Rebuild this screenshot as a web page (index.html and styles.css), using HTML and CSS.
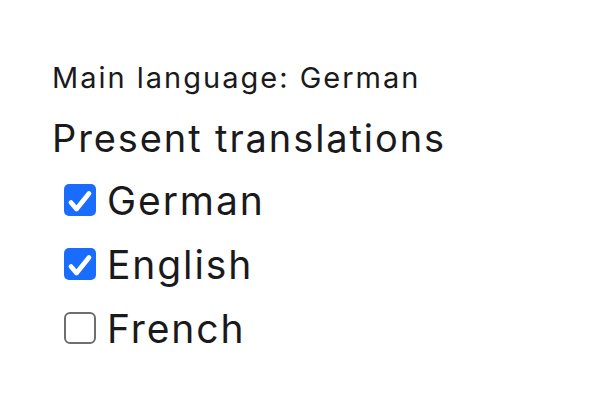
FILE: index.html
```html
<!DOCTYPE html>
<html lang="en">
<head>
    <meta charset="UTF-8">
    <meta name="viewport" content="width=device-width, initial-scale=1.0">
    <title>Translations</title>
    <link rel="stylesheet" href="styles.css">
</head>
<body>
    <div class="panel">
        <p class="main-lang">Main language: German</p>
        <h2 class="title">Present translations</h2>
        <ul class="lang-list">
            <li>
                <label class="lang">
                    <input type="checkbox" checked>
                    <span class="box">
                        <svg viewBox="0 0 32 32" width="32" height="32"><path d="M7 18.5 L12.5 25 L25 9.5" fill="none" stroke="#fff" stroke-width="4.8" stroke-linecap="round" stroke-linejoin="round"/></svg>
                    </span>
                    <span class="name">German</span>
                </label>
            </li>
            <li>
                <label class="lang">
                    <input type="checkbox" checked>
                    <span class="box">
                        <svg viewBox="0 0 32 32" width="32" height="32"><path d="M7 18.5 L12.5 25 L25 9.5" fill="none" stroke="#fff" stroke-width="4.8" stroke-linecap="round" stroke-linejoin="round"/></svg>
                    </span>
                    <span class="name">English</span>
                </label>
            </li>
            <li>
                <label class="lang">
                    <input type="checkbox">
                    <span class="box"></span>
                    <span class="name">French</span>
                </label>
            </li>
        </ul>
    </div>
</body>
</html>
```

FILE: styles.css
```css
body {
    margin: 0;
    background: #fff;
    color: #1a1a1c;
    font-family: Inter, "Noto Sans", sans-serif;
}

.panel {
    padding: 58px 52px;
}

.main-lang {
    margin: 0;
    font-size: 29px;
    line-height: 40px;
    letter-spacing: 2px;
}

.title {
    margin: 16px 0 0;
    font-size: 38px;
    font-weight: 400;
    line-height: 48px;
    letter-spacing: 1.9px;
}

.lang-list {
    list-style: none;
    margin: 6px 0 0 12px;
    padding: 0;
}

.lang {
    display: flex;
    align-items: center;
    gap: 11px;
    height: 64px;
    font-size: 39px;
    letter-spacing: 1.9px;
}

.lang input {
    display: none;
}

.box {
    width: 32px;
    height: 32px;
    box-sizing: border-box;
    border-radius: 6px;
    border: 2.5px solid #6e6e6e;
    display: flex;
}

.lang input:checked + .box {
    background: #1a6cfe;
    border: none;
    border-radius: 5px;
}
```
